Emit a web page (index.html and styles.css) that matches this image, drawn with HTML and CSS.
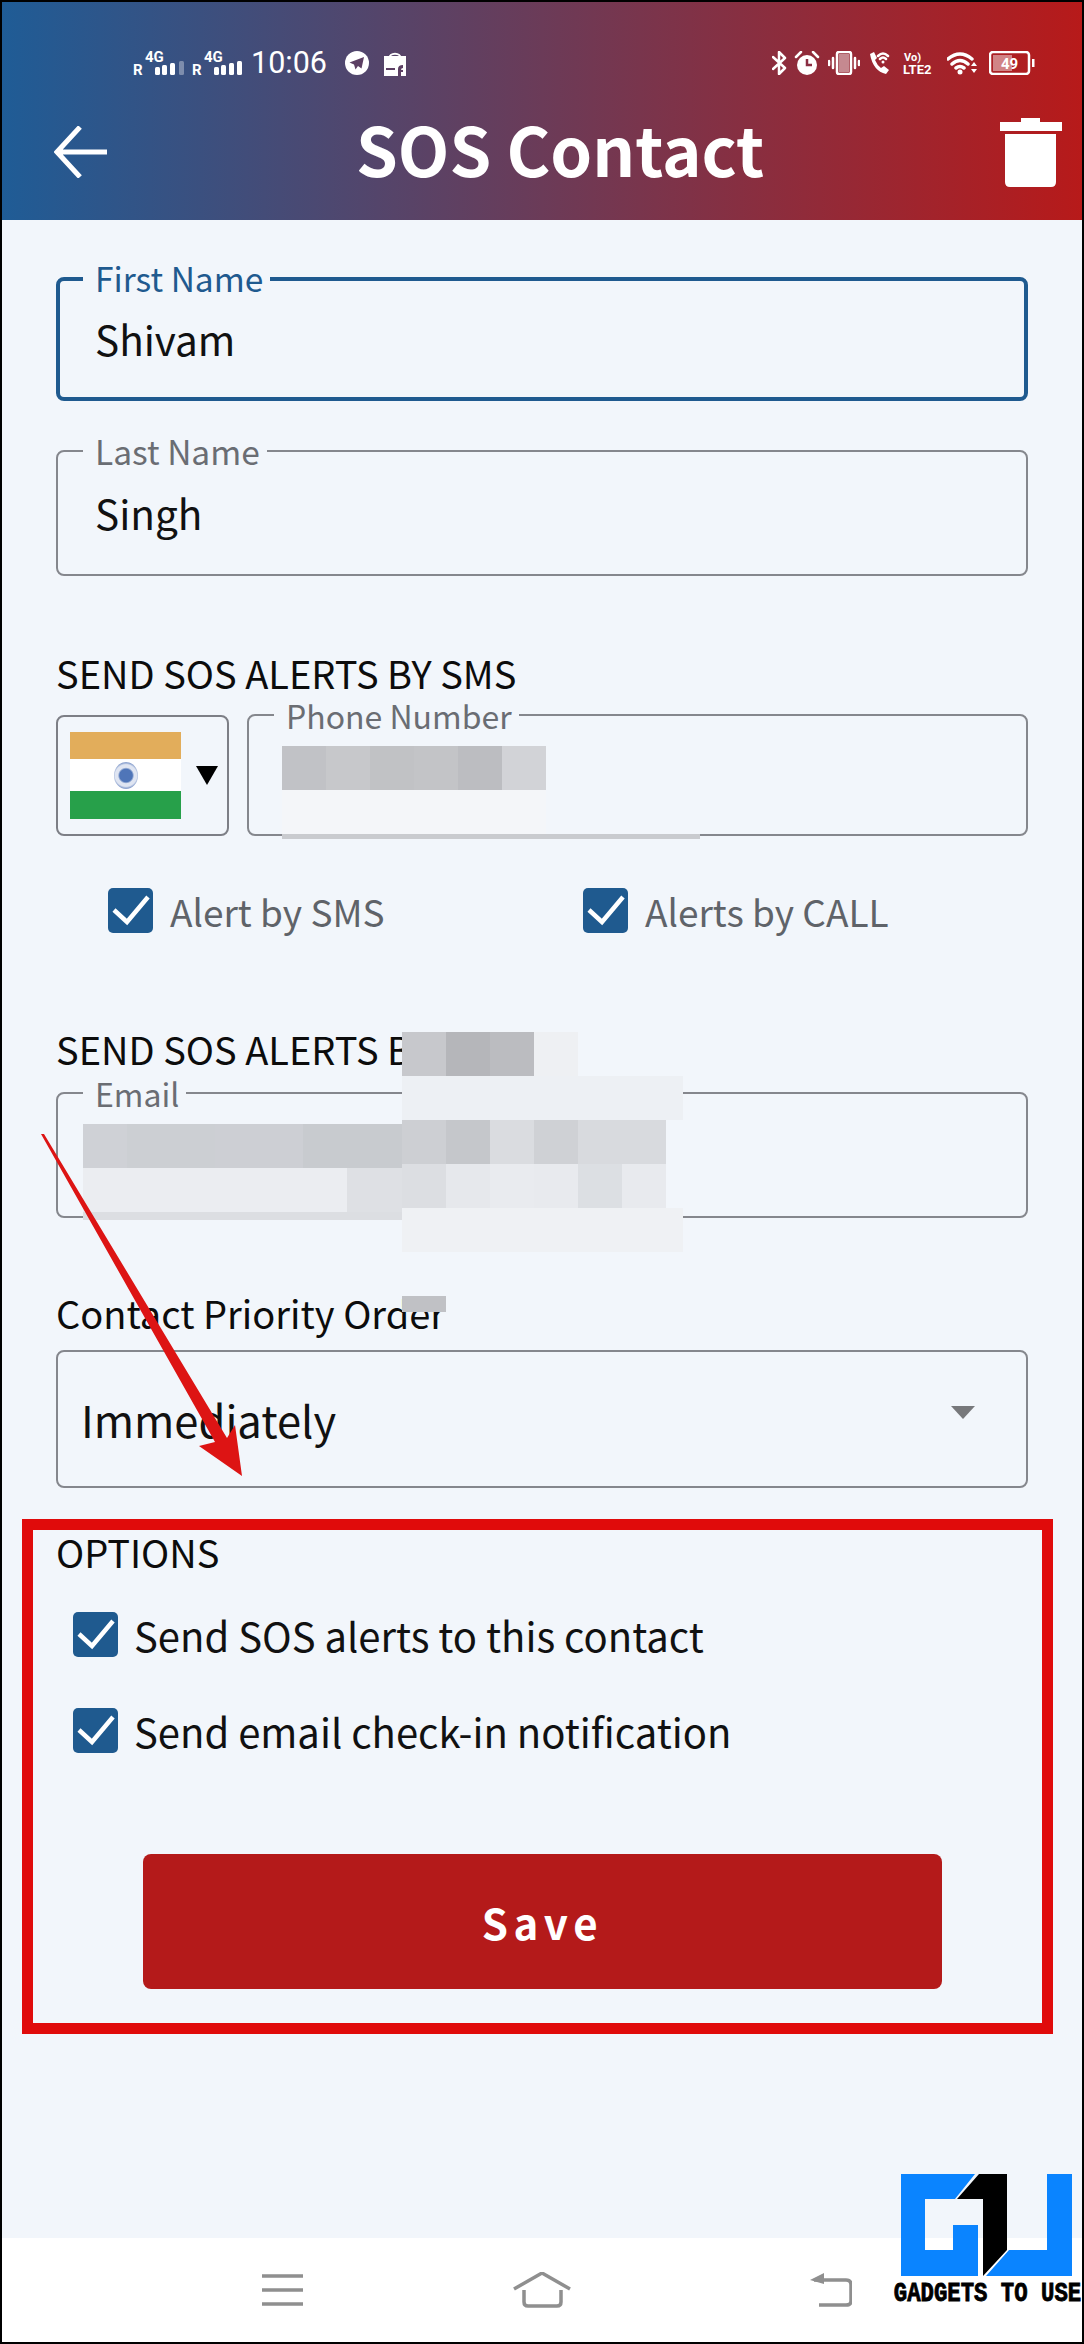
FILE: index.html
```html
<!DOCTYPE html>
<html lang="en">
<head>
<meta charset="utf-8">
<title>SOS Contact</title>
<link rel="stylesheet" href="styles.css">
</head>
<body>
<div class="screen">
  <header class="appbar">
    <div class="status">
      <div class="status-left">
        <svg class="sig" width="52" height="36" viewBox="0 -5 52 36"><text class="st-b" x="0" y="25" font-size="15">R</text><text class="st-b" x="12" y="12" font-size="15">4G</text><rect class="w" x="22" y="17" width="5" height="8" rx="1.5"/><rect class="w" x="29" y="15" width="5" height="10" rx="1.5"/><rect class="w" x="37" y="13" width="5" height="12" rx="1.5"/><rect class="w dim" x="46" y="11" width="5" height="14" rx="1.5"/></svg>
        <svg class="sig sig2" width="52" height="36" viewBox="0 -5 52 36"><text class="st-b" x="0" y="25" font-size="15">R</text><text class="st-b" x="12" y="12" font-size="15">4G</text><rect class="w" x="22" y="17" width="5" height="8" rx="1.5"/><rect class="w" x="29" y="15" width="5" height="10" rx="1.5"/><rect class="w" x="37" y="13" width="5" height="12" rx="1.5"/><rect class="w" x="45" y="11" width="5" height="14" rx="1.5"/></svg>
        <span class="clock">10:06</span>
        <svg class="tg" width="24" height="24" viewBox="0 0 24 24"><circle class="w" cx="12" cy="12" r="12"/><path class="plane" d="M19 6 L4.500 11.500 L9 13.500 L10.500 18.500 L13 15 L16.500 17.500 Z"/></svg>
        <svg class="fb" width="24" height="25" viewBox="0 0 24 25"><path class="w" d="M1 5 H23 V25 H1 Z"/><path class="cut" d="M6 8 C6 1 18 1 18 8" /><path class="plane" d="M15 25 V18 Q15 14 20 14 V17 Q18 17 18 19 H20 V21 H18 V25 Z M3 17 H12 V19 H3 Z"/></svg>
      </div>
      <div class="status-right">
        <svg class="ic-bt" width="15" height="24" viewBox="0 0 15 24"><path class="ln" d="M1 6 L13 17 L7 23 V1 L13 7 L1 18"/></svg>
        <svg class="ic-alarm" width="26" height="24" viewBox="0 0 26 24"><circle class="w" cx="13" cy="14" r="10"/><path class="clockhand" d="M13 8 V14 H18"/><path class="ln" d="M2 6 L7 1 M24 6 L19 1"/></svg>
        <svg class="ic-vib" width="32" height="24" viewBox="0 0 32 24"><rect class="ln" x="9" y="1" width="14" height="22" rx="2"/><rect class="w half" x="11" y="3" width="10" height="18"/><path class="ln" d="M5 7 V17 M1 10 V14 M27 7 V17 M31 10 V14"/></svg>
        <svg class="ic-call" width="25" height="24" viewBox="0 0 25 24"><path class="w" d="M2 3 L6 1 L9 7 L7 9 Q9 14 13 17 L16 15 L21 19 L18 23 Q5 20 2 3 Z"/><path class="ln" d="M10 5 Q15 0 20 5 M12 8 Q15 5 18 8"/><circle class="w" cx="15" cy="11" r="1.500"/></svg>
        <svg class="ic-volte" width="36" height="34" viewBox="0 -5 36 34"><text class="st-b" x="1" y="10" font-size="11">Vo)</text><text class="st-b" x="0" y="23" font-size="13">LTE2</text></svg>
        <svg class="ic-wifi" width="31" height="24" viewBox="0 0 31 24"><path class="ln thick" d="M1 8 Q13 -2 25 8 M5 13 Q13 6 21 13 M9 17 Q13 14 17 17"/><circle class="w" cx="13" cy="21" r="2.500"/><path class="w" d="M27 11 L30 15 H24 Z M24 18 H30 L27 22 Z"/></svg>
        <svg class="ic-batt" width="46" height="24" viewBox="0 0 46 24"><rect class="ln" x="1" y="1" width="39" height="22" rx="3"/><rect class="w half" x="4" y="4" width="19" height="16"/><rect class="w" x="43" y="8" width="2.500" height="8"/><text class="st-b" x="12" y="18" font-size="15">49</text></svg>
      </div>
    </div>
    <div class="titlebar">
      <svg class="back" width="53" height="52" viewBox="0 0 53 52"><path d="M53 26 H3 M26 1 L3 26 L26 51"/></svg>
      <h1 class="title">SOS Contact</h1>
      <svg class="trash" width="62" height="69" viewBox="0 0 62 69"><path d="M21 0 H40 V4 H62 V13 H0 V4 H21 Z M5 16 H56 V64 Q56 69 51 69 H10 Q5 69 5 64 Z"/></svg>
    </div>
  </header>

  <main class="form">
    <div class="field field-first focus"><span class="legend legend-focus">First Name</span><span class="value">Shivam</span></div>
    <div class="field field-last"><span class="legend">Last Name</span><span class="value">Singh</span></div>

    <h2 class="heading h-sms">SEND SOS ALERTS BY SMS</h2>
    <div class="phone-row">
      <div class="country">
        <div class="flag"><span class="flag-o"></span><span class="flag-w"><i class="chakra"></i></span><span class="flag-g"></span></div>
        <span class="tri"></span>
      </div>
      <div class="field phone"><span class="legend legend-sm">Phone Number</span></div>
    </div>
    <div class="alert-row">
      <label class="check alert"><span class="box"><svg width="45" height="45" viewBox="0 0 45 45"><path d="M6 22 L19 34 L40 9"/></svg></span><span class="alert-text">Alert by SMS</span></label>
      <label class="check alert"><span class="box"><svg width="45" height="45" viewBox="0 0 45 45"><path d="M6 22 L19 34 L40 9"/></svg></span><span class="alert-text">Alerts by CALL</span></label>
    </div>

    <h2 class="heading h-email">SEND SOS ALERTS BY EMAIL</h2>
    <div class="field email"><span class="legend legend-sm">Email</span></div>

    <h2 class="heading h-priority">Contact Priority Order</h2>
    <div class="select"><span class="select-value">Immediately</span><span class="caret"></span></div>

    <h2 class="heading h-options">OPTIONS</h2>
    <label class="check opt opt-1"><span class="box"><svg width="45" height="45" viewBox="0 0 45 45"><path d="M6 22 L19 34 L40 9"/></svg></span><span class="opt-text">Send SOS alerts to this contact</span></label>
    <label class="check opt opt-2"><span class="box"><svg width="45" height="45" viewBox="0 0 45 45"><path d="M6 22 L19 34 L40 9"/></svg></span><span class="opt-text">Send email check-in notification</span></label>
    <button class="save" type="button">Save</button>
  </main>

  <nav class="navbar">
    <svg class="nav-menu" width="41" height="32" viewBox="0 0 41 32"><path d="M0 2 H41 M0 16 H41 M0 30 H41"/></svg>
    <svg class="nav-home" width="58" height="36" viewBox="0 0 58 36"><path d="M1 17 L29 1 L57 17 M11 18 V30 Q11 34 15 34 H44 Q48 34 48 30 V18"/></svg>
    <svg class="nav-back" width="42" height="34" viewBox="0 0 42 34"><path d="M4 7 H36 Q41 7 41 12 V28 Q41 32 36 32 H9"/><path class="fillhead" d="M0 7 L14 0 V11 Z"/></svg>
  </nav>

  <div class="blur b-phone1"></div>
  <div class="blur b-phone2"></div>
  <div class="blur b-phone3"></div>
  <div class="blur b-em1"></div>
  <div class="blur b-em2"></div>
  <div class="blur b-em3"></div>
  <div class="blur b-r1"></div>
  <div class="blur b-r2"></div>
  <div class="blur b-r3"></div>
  <div class="blur b-r4"></div>
  <div class="blur b-r5"></div>
  <div class="blur b-r6"></div>

  <svg class="arrow" width="260" height="360" viewBox="0 0 260 360"><polygon points="39,0 42,0 225,304 233,291 240,342 197,312 213,308"/></svg>
  <div class="redbox"></div>

  <div class="logo">
    <svg width="171" height="102" viewBox="0 0 171 102"><path class="lb" d="M0 0 H74 L54 25 H24 V76 H52 V51 H77 V102 H0 Z"/><path d="M78 0 H106 V76 L82 102 V25 H56 Z"/><path class="lb" d="M146 0 H171 V102 H85 L108 76 H146 Z"/></svg>
    <span class="logo-text">GADGETS TO USE</span>
  </div>
</div>
</body>
</html>
```

FILE: styles.css
```css
* { box-sizing: border-box; }
html, body { margin: 0; padding: 0; background: #000; }
body { padding: 2px 2px; height: 2344px; overflow: hidden; }

.screen {
  position: relative;
  width: 1080px;
  height: 2340px;
  background: #f2f6fb;
  display: flex;
  flex-direction: column;
  overflow: hidden;
  font-family: "Noto Sans CJK SC", "Noto Sans", sans-serif;
  color: #111;
}

/* app bar */
.appbar {
  height: 218px;
  flex: none;
  background: linear-gradient(90deg, #1f5c96 0%, #b71a1a 100%);
  color: #fff;
}
.status {
  display: flex;
  justify-content: space-between;
  align-items: center;
  height: 26px;
  margin-top: 48px;
  padding: 0 47px 0 131px;
}
.status-left, .status-right { display: flex; align-items: center; }
.ic-alarm { margin-left: 7px; }
.ic-vib { margin-left: 8px; }
.ic-call { margin-left: 8px; }
.ic-volte { margin-left: 10px; margin-right: -3px; }
.ic-wifi { margin-left: 11px; }
.ic-batt { margin-left: 11px; }
.w { fill: #fff; }
.dim { opacity: .35; }
.half { opacity: .45; }
.ln { fill: none; stroke: #fff; stroke-width: 2.5; stroke-linejoin: round; stroke-linecap: round; }
.thick { stroke-width: 3.5; }
.st-b { font-family: Roboto, sans-serif; font-weight: 700; fill: #fff; }
.sig2 { margin-left: 7px; }
.clock { font-family: Roboto, sans-serif; font-size: 30.5px; line-height: 26px; margin-left: 7px; letter-spacing: 0; }
.tg { margin-left: 18px; }
.fb { margin-left: 14px; }
.plane { fill: #5c3f63; }
.cut { fill: none; stroke: #fff; stroke-width: 2; }
.clockhand { fill: none; stroke: #8a2e43; stroke-width: 2.500; }

.titlebar {
  display: flex;
  align-items: center;
  height: 72px;
  margin-top: 40px;
}
.back { margin-left: 52px; }
.back path { fill: none; stroke: #fff; stroke-width: 5; }
.title {
  margin: 0 0 8px 249px;
  font-size: 67px;
  line-height: 72px;
  font-weight: 700;
  color: #fff;
  letter-spacing: 0;
}
.trash { margin-left: auto; margin-right: 20px; }
.trash path { fill: #fff; }

/* form */
.form {
  flex: 1;
  display: flex;
  flex-direction: column;
  padding: 0 54px;
}
.field {
  position: relative;
  border: 2px solid #85878d;
  border-radius: 8px;
  display: flex;
  align-items: center;
  padding: 0 37px;
  flex: none;
}
.field-first { height: 124px; margin-top: 57px; }
.field-last { height: 126px; margin-top: 49px; }
.focus { border: 4px solid #1f5a8f; padding: 0 35px; }
.legend {
  position: absolute;
  top: -21px;
  left: 25px;
  padding: 0 7px 0 12px;
  background: #f2f6fb;
  font-size: 33.5px;
  line-height: 40px;
  color: #6a6d73;
}
.legend-sm { font-size: 32px; }
.focus .legend { top: -23px; left: 23px; }
.legend-focus { color: #1f5a8f; }
.value { font-size: 40.5px; line-height: 50px; color: #111; }

.heading { margin: 0; font-size: 38px; line-height: 44px; font-weight: 400; color: #0c0c0c; white-space: nowrap; }
.h-sms { margin-top: 75px; }
.h-email { margin-top: 94px; }
.h-priority { margin-top: 73px; }
.h-options { margin-top: 42px; }

.phone-row { display: flex; margin-top: 20px; gap: 18px; flex: none; }
.country {
  width: 173px;
  height: 121px;
  border: 2px solid #7d7f86;
  border-radius: 8px;
  display: flex;
  align-items: center;
  padding-left: 12px;
  flex: none;
}
.flag { width: 111px; height: 87px; display: flex; flex-direction: column; }
.flag-o { height: 27px; background: #e2ad5b; }
.flag-w { height: 32px; background: #fff; display: flex; align-items: center; justify-content: center; }
.flag-g { height: 28px; background: #27a04a; }
.chakra { width: 24px; height: 27px; border-radius: 50%; background: radial-gradient(circle, #4f75b8 0 35%, #dfe5f2 45% 60%, #8fa5d0 70% 100%); }
.tri {
  width: 0; height: 0;
  margin-left: 15px;
  border-left: 11.5px solid transparent;
  border-right: 11.500px solid transparent;
  border-top: 19px solid #000;
}
.phone { flex: 1; height: 122px; margin-top: -1px; }

.alert-row { display: flex; margin-top: 52px; padding-left: 52px; flex: none; }
.check { display: flex; align-items: center; flex: none; }
.alert { width: 475px; height: 45px; }
.box {
  width: 45px;
  height: 45px;
  background: #1f5a8f;
  border-radius: 5px;
  display: flex;
  align-items: center;
  justify-content: center;
  flex: none;
}
.box path { fill: none; stroke: #fff; stroke-width: 4.5; }
.alert-text { margin-left: 17px; font-size: 37px; line-height: 44px; color: #5f6369; }
.email { height: 126px; margin-top: 21px; }

.select {
  height: 138px;
  margin-top: 15px;
  border: 2px solid #85878d;
  border-radius: 8px;
  display: flex;
  align-items: center;
  justify-content: space-between;
  padding: 0 51px 0 23px;
  flex: none;
}
.select-value { font-size: 43.5px; line-height: 56px; margin-top: 2px; color: #111; }
.caret {
  width: 0; height: 0;
  margin-top: -14px;
  border-left: 12.5px solid transparent;
  border-right: 12.5px solid transparent;
  border-top: 13px solid #77787b;
}

.opt { padding-left: 17px; height: 45px; }
.opt-1 { margin-top: 38px; }
.opt-2 { margin-top: 51px; }
.opt-text { margin-left: 16px; font-size: 40px; line-height: 50px; color: #111; }

.save {
  width: 799px;
  height: 135px;
  margin: 101px 0 0 87px;
  border: 0;
  border-radius: 8px;
  background: #b41a1a;
  color: #fff;
  font-family: inherit;
  font-size: 42px;
  font-weight: 700;
  letter-spacing: 5.5px;
  flex: none;
}

/* nav */
.navbar {
  height: 104px;
  flex: none;
  background: #fff;
  display: flex;
  align-items: center;
  padding-left: 260px;
}
.navbar path { fill: none; stroke: #8f8f8f; stroke-width: 3.5; }
.nav-home { margin-left: 210px; }
.nav-back { margin-left: 239px; }
.navbar .fillhead { fill: #8f8f8f; stroke: none; }

/* redaction blur, painted over the content */
.blur { position: absolute; }
.b-phone1 {
  left: 280px; top: 744px; width: 264px; height: 44px;
  background: linear-gradient(90deg, #c1c2c6 0 44px, #c7c8cb 44px 88px, #c1c2c5 88px 132px, #c3c4c7 132px 176px, #bcbdc1 176px 220px, #d2d3d7 220px);
}
.b-phone2 { left: 280px; top: 788px; width: 264px; height: 44px; background: #f4f6f9; }
.b-phone3 { left: 280px; top: 832px; width: 418px; height: 5px; background: #c9cbcf; }
.b-em1 {
  left: 81px; top: 1122px; width: 319px; height: 44px;
  background: linear-gradient(90deg, #cfd1d6 0 44px, #cccfd3 44px 132px, #cdcfd4 132px 220px, #c8cbcf 220px);
}
.b-em2 {
  left: 81px; top: 1166px; width: 319px; height: 44px;
  background: linear-gradient(90deg, #ebedf1 0 264px, #dee0e4 264px);
}
.b-em3 { left: 81px; top: 1210px; width: 319px; height: 8px; background: #dcdee2; }
.b-r1 {
  left: 400px; top: 1030px; width: 176px; height: 44px;
  background: linear-gradient(90deg, #c7c8cc 0 44px, #b5b6ba 44px 88px, #bbbcc0 88px 132px, #eef0f3 132px);
}
.b-r2 { left: 400px; top: 1074px; width: 281px; height: 44px; background: #edf0f4; }
.b-r3 {
  left: 400px; top: 1118px; width: 264px; height: 44px;
  background: linear-gradient(90deg, #cdcfd3 0 44px, #c5c7cb 44px 88px, #dadce0 88px 132px, #cfd1d5 132px 176px, #d8dade 176px);
}
.b-r4 {
  left: 400px; top: 1162px; width: 264px; height: 44px;
  background: linear-gradient(90deg, #dcdee2 0 44px, #e6e8ec 44px 88px, #e9ebef 88px 132px, #e8eaee 132px 176px, #dcdfe3 176px 220px, #e8eaee 220px);
}
.b-r5 { left: 400px; top: 1206px; width: 281px; height: 44px; background: #eff1f4; }
.b-r6 { left: 400px; top: 1294px; width: 44px; height: 16px; background: #c0c1c5; }

/* annotations */
.arrow { position: absolute; left: 0; top: 1132px; }
.arrow polygon { fill: #dd1414; }
.redbox {
  position: absolute;
  left: 20px; top: 1517px;
  width: 1031px; height: 515px;
  border: 11px solid #e00b0b;
}
.logo {
  position: absolute;
  left: 891px; top: 2172px;
  width: 189px;
  display: flex;
  flex-direction: column;
  align-items: center;
}
.logo svg { margin-left: -2px; display: block; fill: #000; }
.logo .lb { fill: #0a84ff; }
.logo-text {
  margin-top: 8px;
  font-family: "Liberation Mono", monospace;
  font-weight: 700;
  font-size: 22.3px;
  line-height: 20px;
  color: #000;
  white-space: nowrap;
  -webkit-text-stroke: .7px #000;
  transform: scaleY(1.2);
}
```
